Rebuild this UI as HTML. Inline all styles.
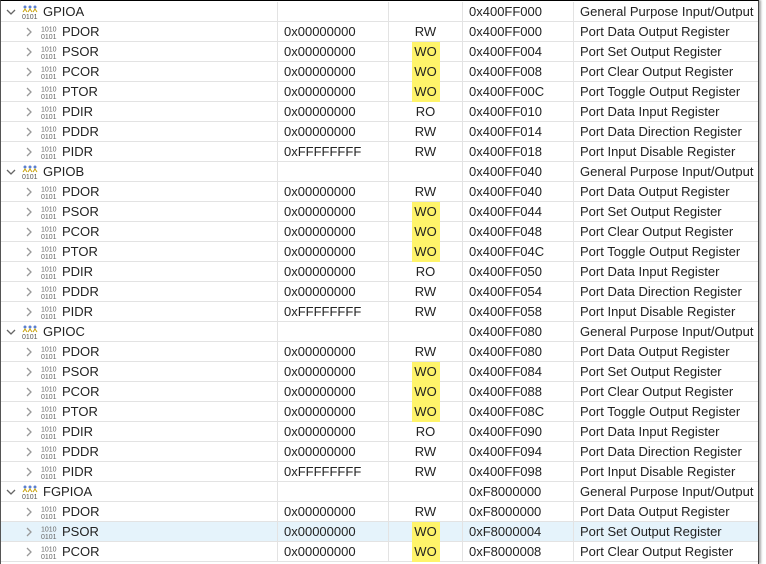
<!DOCTYPE html><html><head><style>
body{margin:0;width:766px;height:563px;background:#fff;overflow:hidden;font-family:"Liberation Sans","Noto Sans CJK SC",sans-serif;font-size:13px;color:#222}
#t{position:absolute;left:0;top:0;width:757px;height:563px;border-top:1px solid #000;border-left:1px solid #555;border-right:1px solid #444;box-shadow:2px 0 2px #aaa;overflow:hidden}
.r{position:absolute;left:0;width:757px;height:20px;border-bottom:1px solid #e3e3e3;box-sizing:border-box}
.r div{position:absolute;top:0;height:19px;line-height:20px;white-space:nowrap}
.r svg{display:block}
.c{border-right:1px solid #e3e3e3;box-sizing:border-box}
.sel{background:#e5f3fb}
.wo{background:#fff46a;}
</style></head><body><div id="t">
<script>
const groups=[["GPIOA","400FF0"],["GPIOB","400FF0"],["GPIOC","400FF0"],["FGPIOA","F80000"]];
const base=[0x000,0x040,0x080,0x000];
const regs=[["PDOR","RW",0,"Port Data Output Register"],["PSOR","WO",4,"Port Set Output Register"],["PCOR","WO",8,"Port Clear Output Register"],["PTOR","WO",12,"Port Toggle Output Register"],["PDIR","RO",16,"Port Data Input Register"],["PDDR","RW",20,"Port Data Direction Register"],["PIDR","RW",24,"Port Input Disable Register"]];
let h="",row=0;
function addr(g,o){if(g==3)return "0xF80000"+(o).toString(16).toUpperCase().padStart(2,"0");return "0x400FF"+(base[g]+o).toString(16).toUpperCase().padStart(3,"0");}
function cols(v,a,ad,d,wo){return `<div class="c" style="left:0;width:277px;height:19px"></div><div class="c" style="left:277px;width:111px;padding-left:6px">${v}</div><div class="c" style="left:388px;width:74px;text-align:center">${wo?'<span class="wo" style="display:inline-block;width:28px;height:20px">'+a+'</span>':a}</div><div class="c" style="left:462px;width:111px;padding-left:6px">${ad}</div><div style="left:573px;width:184px;padding-left:6px">${d}</div>`;}
const chevD='<svg width="10" height="10"><path d="M1 3l4 4 4-4" stroke="#666" stroke-width="1.3" fill="none"/></svg>';
const chevR='<svg width="10" height="10"><path d="M3 1l4 4-4 4" stroke="#999" stroke-width="1.3" fill="none"/></svg>';
for(let g=0;g<4;g++){
 h+=`<div class="r" style="top:${1+row*20}px">${cols("","",addr(g,0),"General Purpose Input/Output")}<div style="left:5px;top:5px;height:10px">${chevD}</div><div style="left:21px;top:3px;width:16px;height:14px"><svg width="17" height="15"><circle cx="3" cy="2" r="1.5" fill="#5b7fd0"/><circle cx="8" cy="2" r="1.5" fill="#5b7fd0"/><circle cx="13" cy="2" r="1.5" fill="#5b7fd0"/><path d="M1 7l2-3 2 3M6 7l2-3 2 3M11 7l2-3 2 3" stroke="#c9a000" fill="none"/><text x="0" y="14" font-size="7" fill="#555">0101</text></svg></div><div style="left:42px">${groups[g][0]}</div></div>`;row++;
 for(const r of regs){if(row>=28)break;
  const sel=(g==3&&r[0]=="PSOR")?" sel":"";
  h+=`<div class="r${sel}" style="top:${1+row*20}px">${cols(r[0]=="PIDR"?"0xFFFFFFFF":"0x00000000",r[1],addr(g,r[2]),r[3],r[1]=="WO")}<div style="left:23px;top:5px;height:10px">${chevR}</div><div style="left:40px;top:3px"><svg width="17" height="15"><text x="0" y="6.5" font-size="7" fill="#666">1010</text><text x="0" y="14" font-size="7" fill="#666">0101</text></svg></div><div style="left:61px">${r[0]}</div></div>`;row++;}
}
document.write(h);
</script>
</div></body></html>
